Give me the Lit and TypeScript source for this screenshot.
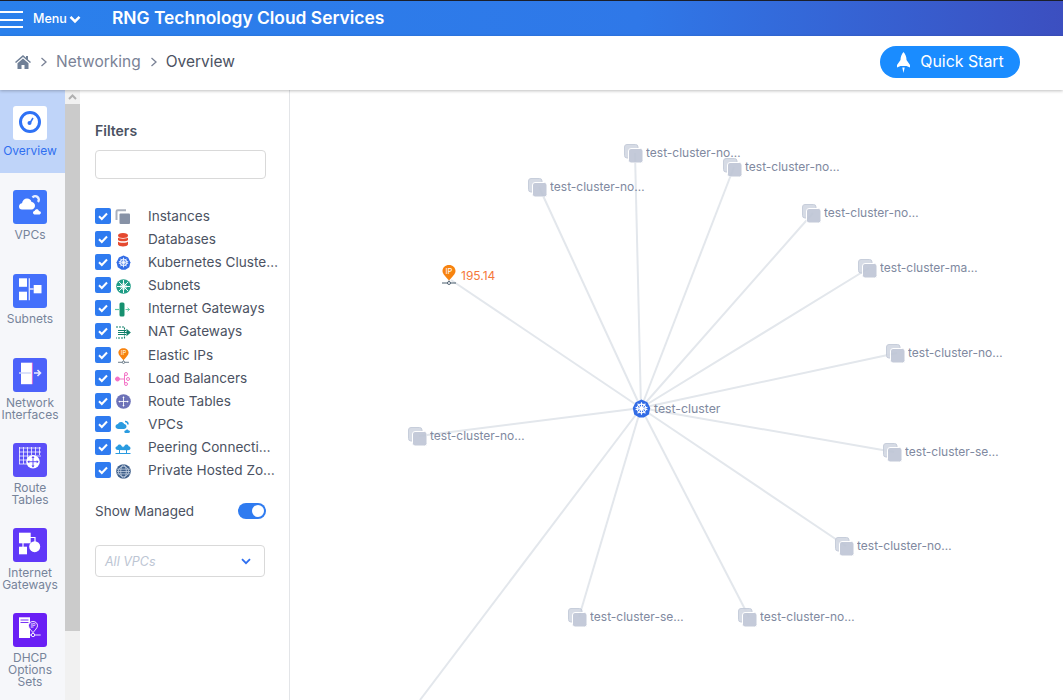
import { LitElement, html, css, svg } from "lit";
import { customElement } from "lit/decorators.js";

const stack = () => svg`
  <rect x=".5" y=".5" width="13.500" height="13.500" rx="2.500" fill="#d3d8e3" stroke="#c3cad8"/>
  <rect x="4.500" y="4.500" width="14.500" height="14.500" rx="2.500" fill="#bfc6d6" stroke="#fff" stroke-width="1"/>`;

const k8s = (size: number) => html`<svg width="${size}" height="${size}" viewBox="0 0 20 20">
  <path d="M10 .6l6.200 2.700 3 6.300-1.500 6.600-5.200 3.300H7.500L2.300 16.200.8 9.600l3-6.300z" fill="#326ce5"/>
  <g stroke="#fff" fill="none" stroke-width="1.100">
    <circle cx="10" cy="10" r="4.600"/>
    <path d="M10 3.500V16.500M3.700 8.600l12.600 2.800M16.300 8.600L3.700 11.400M5.900 4.900l8.200 10.200M14.100 4.900L5.900 15.100"/>
  </g></svg>`;

const ipPin = (w: number, h: number) => html`<svg width="${w}" height="${h}" viewBox="0 0 14 20">
  <path d="M7 0c3.700 0 6.500 2.600 6.500 6 0 3-3.500 6-6.500 9.500C4 12 .5 9 .5 6 .5 2.600 3.300 0 7 0z" fill="#f7830f"/>
  <text x="7" y="8.500" font-size="7.500" fill="#fff" text-anchor="middle" font-family="Inter, sans-serif">IP</text>
  <path d="M0 18h14" stroke="#33495c" stroke-width=".9"/>
  <circle cx="7" cy="18" r="1.500" fill="#fff" stroke="#33495c" stroke-width=".8"/>
  <path d="M7 15.500v1" stroke="#33495c" stroke-width=".8"/></svg>`;

const navIcons: Record<string, unknown> = {
  Overview: svg`<circle cx="17" cy="16" r="9.500" fill="none" stroke="#2f72f5" stroke-width="3"/>
    <path d="M17 17L20 12" stroke="#2f72f5" stroke-width="1.500"/><circle cx="16.500" cy="17" r="2" fill="#2f72f5"/>`,
  VPCs: svg`<path d="M9 19.500c-2 0-3-1.200-3-3 0-1.700 1.300-3 3-3.200C9.500 10.500 11.500 8.500 14 8.500c2.500 0 4 1.500 4.500 3.500C20.500 12 22 13.800 22 15.800c0 2-1.500 3.700-3.500 3.700z" fill="#fff"/>
    <path d="M19.500 7.500a3.500 3.500 0 0 1 5.500 4.500" fill="none" stroke="#e9eeff" stroke-width="2.400"/>
    <path d="M22 24.500c-1 0-2-.7-2-1.800 0-1 .8-1.700 1.600-1.700.4-1.200 1.200-1.800 2.200-1.800 1.100 0 1.900.7 2.100 1.700 1 .1 2 .8 2 1.800 0 1.100-1 1.800-2 1.800z" fill="#fff"/>`,
  Subnets: svg`<rect x="6" y="4.300" width="8" height="8.500" fill="#fff"/><rect x="6" y="17.700" width="8" height="8.500" fill="#fff"/>
    <rect x="20.700" y="11" width="7.800" height="8.300" fill="#fff"/><path d="M16.300 4.300v22M16.300 15H20.700" stroke="#dfe4ff" stroke-width="1.300"/>`,
  "Network Interfaces": svg`<rect x="8" y="4.700" width="11" height="21.500" fill="#fff"/><path d="M19.400 4.700v21.500" stroke="#e870d8" stroke-width=".9"/>
    <path d="M6 15h12" stroke="#cfd8f8" stroke-width="1.600"/><path d="M21 15h6.500M24.500 12l3 3-3 3" fill="none" stroke="#e8eaff" stroke-width="1.600"/>`,
  "Route Tables": svg`<g stroke="#fff" stroke-width="1" fill="none" opacity=".75">
      <path d="M6.500 4V21M10.500 4V21M14.500 4V21M18.500 4V12M22.500 4V12M26.500 4V12M6 5H28M6 9H28M6 13H28M6 17H14M6 21H14"/></g>
    <circle cx="20" cy="18.700" r="6.800" fill="#fff"/>
    <path d="M20 13.700v10M15 18.700h10" stroke="#5b44f5" stroke-width=".9"/>
    <path d="M20 13l-1.500 2h3zM20 24.400l-1.500-2h3zM14.300 18.700l2-1.500v3zM25.700 18.700l-2-1.500v3z" fill="#5b44f5"/>`,
  "Internet Gateways": svg`<rect x="6" y="4.700" width="11.700" height="10.600" fill="#fff"/><rect x="6" y="18.700" width="8" height="7.600" fill="#fff"/>
    <circle cx="21.700" cy="18.700" r="5.500" fill="#fff"/><path d="M17 9.500h5v5" fill="none" stroke="#fff" stroke-width="1.200"/><path d="M10 15v4" stroke="#fff" stroke-width="1.200"/>`,
  "DHCP Options Sets": svg`<rect x="6" y="4.300" width="11" height="20.700" fill="#fff"/>
    <path d="M7.500 7h8M7.500 9.500h8" stroke="#6a1ff5" stroke-width=".9"/>
    <path d="M20 8.500c2.800 0 4.500 1.900 4.500 4.200 0 2.300-2.800 4.500-4.500 7-1.700-2.500-4.500-4.700-4.500-7 0-2.300 1.700-4.200 4.500-4.200z" fill="#6a1ff5" stroke="#fff" stroke-width=".9"/>
    <text x="20" y="15" font-size="5.500" fill="#fff" text-anchor="middle" font-family="Inter, sans-serif">IP</text>
    <path d="M15 22h12.700" stroke="#fff" stroke-width=".9"/><circle cx="20" cy="22" r="1.700" fill="#6a1ff5" stroke="#fff" stroke-width=".9"/>`,
};

const NAV = [
  { id: "Overview", lines: ["Overview"], bg: "#fff", active: true },
  { id: "VPCs", lines: ["VPCs"], bg: "#3f76fa" },
  { id: "Subnets", lines: ["Subnets"], bg: "#4470fb" },
  { id: "Network Interfaces", lines: ["Network", "Interfaces"], bg: "#4c62fa" },
  { id: "Route Tables", lines: ["Route", "Tables"], bg: "#5b4ff8" },
  { id: "Internet Gateways", lines: ["Internet", "Gateways"], bg: "#6038f8" },
  { id: "DHCP Options Sets", lines: ["DHCP", "Options", "Sets"], bg: "#6a1ff5" },
];

const filterIcons: Record<string, unknown> = {
  Instances: html`<svg width="16" height="16" viewBox="0 0 16 16"><path d="M1.500 11V2.500C1.500 1.700 2 1.200 2.800 1.200H11" fill="none" stroke="#a9b0bd" stroke-width="2"/><rect x="4.500" y="4.500" width="10.500" height="10.500" rx="1" fill="#8792a6"/></svg>`,
  Databases: html`<svg width="16" height="16" viewBox="0 0 16 16"><g fill="#e5492f"><ellipse cx="8" cy="3.500" rx="5" ry="2.500"/><path d="M3 5.500C3.500 7 12.500 7 13 5.500V8C12.500 9.700 3.500 9.700 3 8z"/><path d="M3 9.500C3.500 11.200 12.500 11.200 13 9.500V12.500C12.500 15 3.500 15 3 12.500z"/></g></svg>`,
  "Kubernetes Clusters": k8s(15),
  Subnets: html`<svg width="15" height="15" viewBox="0 0 16 16"><circle cx="8" cy="8" r="7.800" fill="#1f9d86"/><g stroke="#fff" stroke-width="1" fill="none"><circle cx="8" cy="8" r="3"/><path d="M8 1v14M1 8h14M3 3l10 10M13 3L3 13"/></g></svg>`,
  "Internet Gateways": html`<svg width="16" height="16" viewBox="0 0 16 16"><rect x="4.500" y="0.500" width="5" height="14" rx="1.500" fill="#16906f"/><path d="M0 7.500h4" stroke="#5fc7a5" stroke-width="1.200"/><path d="M10.500 7.500h4M12.500 5.800l2 1.700-2 1.700" stroke="#5fc7a5" stroke-width="1" fill="none"/></svg>`,
  "NAT Gateways": html`<svg width="16" height="16" viewBox="0 0 16 16" fill="none" stroke="#12806a" stroke-width="1.100"><path d="M1 2h8.500v11H1" stroke-dasharray="2 1"/><path d="M3 5.500h8M3 7.500h9M3 9.500h8"/><path d="M12 5L15 7.500 12 10z" fill="#12806a"/></svg>`,
  "Elastic IPs": ipPin(11, 16),
  "Load Balancers": html`<svg width="16" height="16" viewBox="0 0 16 16" fill="none" stroke="#f472c6" stroke-width="1"><circle cx="2.500" cy="8" r="2" fill="#f472c6"/><path d="M4.500 8h5M9.500 4v8"/><circle cx="11" cy="3" r="1.500"/><circle cx="13" cy="8" r="1.500"/><circle cx="11" cy="13" r="1.500"/></svg>`,
  "Route Tables": html`<svg width="15" height="15" viewBox="0 0 16 16"><circle cx="8" cy="8" r="7.800" fill="#6d72b8"/><path d="M8 3v10M3 8h10" stroke="#fff" stroke-width=".9"/><path d="M8 2.500L6.800 4.300h2.400zM8 13.500l-1.200-1.800h2.400zM2.500 8l1.800-1.200v2.400zM13.500 8l-1.800-1.200v2.400z" fill="#fff"/></svg>`,
  VPCs: html`<svg width="16" height="16" viewBox="0 0 16 16" fill="#2a9be0"><path d="M3.500 11C1.800 11 .5 10 .5 8.500S1.800 6.200 3 6.100C3.500 4.500 5 3.700 6.500 4c1.300.2 2.200 1 2.600 2.100 1.300 0 2.400 1 2.400 2.400 0 1.500-1.200 2.500-2.700 2.500z"/><path d="M10 3.500A3 3 0 0 1 13 6.500" fill="none" stroke="#2a9be0" stroke-width="1.500"/><path d="M11 15c-1 0-1.700-.6-1.700-1.300s.6-1.200 1.200-1.200c.3-.7.9-1 1.600-1 .8 0 1.300.5 1.500 1.100.7 0 1.400.5 1.400 1.200S14.300 15 13.500 15z"/></svg>`,
  "Peering Connections": html`<svg width="16" height="16" viewBox="0 0 16 16" fill="#2a9be0"><path d="M3 9C1.500 9 .5 8.200.5 7S1.500 5.300 2.300 5.200C2.700 4 3.500 3.500 4.500 3.500S6.300 4 6.700 5.200C7.500 5.300 8 6 8 7c0-1 .6-1.700 1.300-1.800.4-1.200 1.200-1.700 2.200-1.700s1.800.5 2.200 1.700c.8.1 1.800.8 1.800 2s-1 2-2.500 2z"/><path d="M4.500 9v3.500M11.500 9v3.500M.5 12.500h15" stroke="#2a9be0" stroke-width="1"/></svg>`,
  "Private Hosted Zones": html`<svg width="15" height="15" viewBox="0 0 16 16"><circle cx="8" cy="8" r="7.800" fill="#3f5f8a"/><g fill="none" stroke="#c9d6e6" stroke-width=".8"><circle cx="8" cy="8" r="5.500"/><ellipse cx="8" cy="8" rx="3" ry="7"/><path d="M1 5.500h14M1 8h14M1 10.500h14"/></g></svg>`,
};

const FILTERS = [
  "Instances", "Databases", "Kubernetes Clusters", "Subnets", "Internet Gateways", "NAT Gateways",
  "Elastic IPs", "Load Balancers", "Route Tables", "VPCs", "Peering Connections", "Private Hosted Zones",
];

// Graph coordinates are relative to the canvas, whose origin is (290, 90).
const CENTER = { x: 351, y: 318 };
const NODES = [
  { x: 345, y: 63, name: "test-cluster-node-1" },
  { x: 444, y: 77, name: "test-cluster-node-2" },
  { x: 249, y: 97, name: "test-cluster-node-3" },
  { x: 523, y: 123, name: "test-cluster-node-4" },
  { x: 579, y: 178, name: "test-cluster-master" },
  { x: 607, y: 263, name: "test-cluster-node-5" },
  { x: 604, y: 362, name: "test-cluster-secondary" },
  { x: 556, y: 456, name: "test-cluster-node-6" },
  { x: 459, y: 527, name: "test-cluster-node-7" },
  { x: 289, y: 527, name: "test-cluster-secondary-2" },
  { x: 129, y: 346, name: "test-cluster-node-8" },
];
const EXTRA_EDGES = [{ x: 161, y: 190 }, { x: 130, y: 610 }];

@customElement("app-root")
export class AppRoot extends LitElement {
  static styles = css`
    :host { display: block; width: 1063px; height: 700px; overflow: hidden; font-family: Inter, Roboto, "Liberation Sans", sans-serif; background: #fff; }
    .page { display: flex; flex-direction: column; height: 700px; }
    .top { height: 35px; border-top: 1px solid #1b1f2a; display: flex; align-items: center; color: #fff; background: linear-gradient(90deg, #2a80ec 0%, #2f78e8 60%, #3c4fc0 100%); flex: none; }
    .burger { width: 23px; height: 17px; display: flex; flex-direction: column; justify-content: space-between; margin: 2px 10px 0 0; }
    .burger i { display: block; height: 2px; background: #fff; }
    .menu { font-size: 12.500px; font-weight: 500; width: 36px; }
    .chev { margin-right: 31px; margin-top: 2px; }
    .title { font-size: 17.400px; font-weight: 600; white-space: nowrap; margin-bottom: 2px; }
    .crumb { height: 54px; box-sizing: border-box; padding: 0 0 2px 15px; flex: none; display: flex; align-items: center; font-size: 15.500px; color: #7a8296; box-shadow: 0 1px 3px rgba(0,0,0,.25); position: relative; z-index: 2; background: #fff; }
    .crumb > span { margin-bottom: 2px; }
    .sep { margin: 0 8px 0 9px; }
    .crumb > .cur { color: #4b5262; }
    .quick { margin-left: auto; margin-right: 43px; width: 140px; height: 32px; border-radius: 16px; background: #1a8cff; color: #fff; display: flex; align-items: center; justify-content: center; gap: 9px; font-size: 15.900px; }
    .quick span { margin-bottom: 2px; }
    .body { flex: 1; display: flex; min-height: 0; }
    .nav { width: 65px; flex: none; background: #f6f7fa; overflow: hidden; }
    .item { display: flex; flex-direction: column; align-items: center; padding: 16px 5px 17px 0; color: #76849a; font-size: 12px; line-height: 12px; text-align: center; }
    .item.two { padding-bottom: 6px; }
    .item.active { background: #bfd4f9; color: #2f6ff0; padding-bottom: 16px; margin-bottom: 1px; }
    .item svg { display: block; border-radius: 3px; margin-bottom: 5px; }
    .scroll { width: 15px; flex: none; background: #f1f1f1; display: flex; flex-direction: column; }
    .arrow { height: 14px; display: flex; align-items: center; justify-content: center; }
    .thumb { height: 527px; background: #cbcbcb; }
    .panel { width: 209px; flex: none; margin-left: 1px; border-right: 1px solid #e3e5e8; padding: 33px 0 0 14px; box-sizing: border-box; color: #4b5262; font-size: 13.600px; }
    .ptitle { font-weight: 600; line-height: 16px; font-size: 14px; }
    .search { height: 29px; width: 171px; box-sizing: border-box; border: 1px solid #d9d9d9; border-radius: 4px; margin-top: 11px; margin-bottom: 25px; }
    .row { height: 23.180px; display: flex; align-items: center; width: 183.400px; }
    .box { width: 16px; height: 16px; flex: none; border-radius: 2px; background: #2f7bf0; display: flex; align-items: center; justify-content: center; margin-right: 4px; }
    .ficon { width: 16px; height: 16px; flex: none; margin-right: 17px; margin-top: 3px; display: flex; justify-content: center; }
    .ficon svg { display: block; }
    .lbl { overflow: hidden; text-overflow: ellipsis; white-space: nowrap; }
    .managed { display: flex; align-items: center; justify-content: space-between; width: 171px; margin-top: 19px; height: 20px; font-size: 13.500px; }
    .toggle { width: 28px; height: 16px; border-radius: 8px; background: #2f7bf0; display: flex; justify-content: flex-end; align-items: center; padding-right: 2px; box-sizing: border-box; }
    .toggle i { width: 12px; height: 12px; border-radius: 50%; background: #fff; }
    .select { width: 170px; height: 32px; box-sizing: border-box; border: 1px solid #d9d9d9; border-radius: 4px; margin-top: 24px; display: flex; align-items: center; justify-content: space-between; padding: 0 13px 0 9px; font-style: italic; font-size: 12.500px; color: #bcc5d3; }
    .canvas { flex: 1; position: relative; overflow: hidden; }
    .edges { position: absolute; inset: 0; }
    .node { position: absolute; transform: translate(-11px, -9px); display: flex; align-items: center; gap: 3px; font-size: 12px; color: #8089a0; white-space: nowrap; }
    .node svg { display: block; flex: none; opacity: .92; }
    .node span { width: 98px; overflow: hidden; text-overflow: ellipsis; margin-bottom: 2px; }
    .cluster { position: absolute; left: 342px; top: 309px; display: flex; align-items: center; gap: 3px; font-size: 12.300px; color: #8089a0; }
    .cluster svg { display: block; }
    .ip { position: absolute; left: 152px; top: 175px; display: flex; align-items: center; gap: 5px; font-size: 12px; color: #f5783c; }
    .ip svg { display: block; }
  `;

  render() {
    const check = html`<svg width="12" height="12" viewBox="0 0 12 12"><path d="M2 6.300l2.800 2.700L10 3.500" fill="none" stroke="#fff" stroke-width="2"/></svg>`;
    const sep = html`<svg class="sep" width="8" height="10" viewBox="0 0 8 10"><path d="M1.500 1L6 5 1.500 9" fill="none" stroke="#7a8296" stroke-width="1.300"/></svg>`;
    return html`<div class="page">
      <div class="top">
        <div class="burger"><i></i><i></i><i></i></div>
        <span class="menu">Menu</span>
        <svg class="chev" width="12" height="9" viewBox="0 0 12 9"><path d="M1.500 1.800L6 6.300l4.500-4.500" fill="none" stroke="#fff" stroke-width="2.600"/></svg>
        <span class="title">RNG Technology Cloud Services</span>
      </div>
      <div class="crumb">
        <svg width="16" height="16" viewBox="0 0 16 16"><path d="M8 1L0 8l1 1 7-6 7 6 1-1-3-2.600V2h-2v1.700z" fill="#6f7f96"/><path d="M2.500 9.200L8 4.500l5.500 4.700V15H9.500v-4h-3v4h-4z" fill="#6f7f96"/></svg>
        ${sep}<span>Networking</span>${sep}<span class="cur">Overview</span>
        <div class="quick">
          <svg width="15" height="21" viewBox="0 0 15 21"><path d="M7.500 0C9.500 2 10.500 5 10.500 8L14 13v2.500L10.500 14h-6L1 15.500V13l3.500-5c0-3 1-6 3-8z" fill="#fff"/><path d="M6.300 15.500h2.400L7.500 21z" fill="#fff"/></svg>
          <span>Quick Start</span>
        </div>
      </div>
      <div class="body">
        <div class="nav">
          ${NAV.map((n) => html`<div class="item ${n.active ? "active" : ""} ${n.lines.length > 1 ? "two" : ""}">
            <svg width="34" height="34" viewBox="0 0 34 34" style="background:${n.bg}">${navIcons[n.id]}</svg>
            ${n.lines.map((l) => html`<span>${l}</span>`)}
          </div>`)}
        </div>
        <div class="scroll">
          <div class="arrow"><svg width="9" height="6" viewBox="0 0 9 6"><path d="M1 5l3.500-3.500L8 5" fill="none" stroke="#b0b0b0" stroke-width="2"/></svg></div>
          <div class="thumb"></div>
        </div>
        <div class="panel">
          <div class="ptitle">Filters</div>
          <div class="search"></div>
          ${FILTERS.map((k) => html`<div class="row"><span class="box">${check}</span><span class="ficon">${filterIcons[k]}</span><span class="lbl">${k}</span></div>`)}
          <div class="managed"><span>Show Managed</span><span class="toggle"><i></i></span></div>
          <div class="select"><span>All VPCs</span>
            <svg width="10" height="7" viewBox="0 0 10 7"><path d="M1 1.200l4 4 4-4" fill="none" stroke="#2f6ff0" stroke-width="1.800"/></svg></div>
        </div>
        <div class="canvas">
          <svg class="edges" width="773" height="610">
            ${[...NODES, ...EXTRA_EDGES].map((n) => svg`<line x1="${CENTER.x}" y1="${CENTER.y}" x2="${n.x}" y2="${n.y}" stroke="#e3e7ec" stroke-width="2"/>`)}
          </svg>
          ${NODES.map((n) => html`<div class="node" style="left:${n.x}px;top:${n.y}px">
            <svg width="19" height="19" viewBox="0 0 19 19">${stack()}</svg><span>${n.name}</span></div>`)}
          <div class="cluster">${k8s(19)}<span>test-cluster</span></div>
          <div class="ip">${ipPin(14, 20)}<span>195.14</span></div>
        </div>
      </div>
    </div>`;
  }
}
